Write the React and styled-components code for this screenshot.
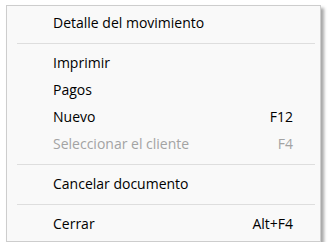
import React from "react";
import styled, { createGlobalStyle } from "styled-components";

const GlobalStyle = createGlobalStyle`
    body {
        margin: 0;
        background: #ffffff;
        font-family: "Open Sans", "Noto Sans", sans-serif;
    }
`;

const items = [
    { label: "Detalle del movimiento" },
    { separator: true },
    { label: "Imprimir" },
    { label: "Pagos" },
    { label: "Nuevo", shortcut: "F12" },
    { label: "Seleccionar el cliente", shortcut: "F4", disabled: true },
    { separator: true },
    { label: "Cancelar documento" },
    { separator: true },
    { label: "Cerrar", shortcut: "Alt+F4" },
];

function App() {
    return (
        <Page>
            <GlobalStyle />
            <Menu>
                {items.map((item, i) =>
                    item.separator ? (
                        <Separator key={i} />
                    ) : (
                        <Item key={i} $disabled={item.disabled}>
                            <span>{item.label}</span>
                            {item.shortcut && <Shortcut>{item.shortcut}</Shortcut>}
                        </Item>
                    )
                )}
            </Menu>
        </Page>
    );
}

// Style :
const Page = styled.div`
    padding: 5px 0 0 6px;
`;

const Menu = styled.div`
    width: 313px;
    padding: 3px 0 4px;
    background: #f9f9f9;
    border: 1px solid #cdcdcd;
    box-shadow: 3px 3px 3px rgba(0, 0, 0, 0.35);
`;

const Item = styled.div`
    display: flex;
    align-items: center;
    justify-content: space-between;
    height: 27px;
    padding: 0 27px 0 46px;
    font-size: 14px;
    color: ${(p) => (p.$disabled ? "#a3a3a3" : "#000000")};
`;

const Shortcut = styled.span`
    font-size: 14px;
`;

const Separator = styled.div`
    height: 1px;
    margin: 7px 5px 5px 10px;
    background: #dedede;
`;

export default App;
